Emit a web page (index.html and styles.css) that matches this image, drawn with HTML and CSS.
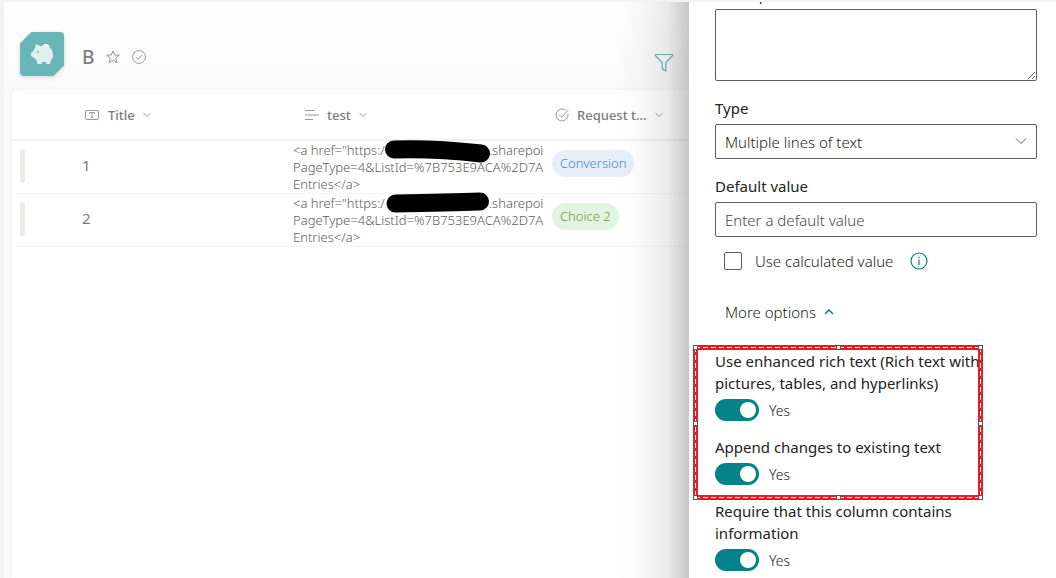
FILE: index.html
```html
<!DOCTYPE html>
<html lang="en">
<head>
<meta charset="utf-8">
<title>B - List</title>
<link rel="stylesheet" href="styles.css">
</head>
<body>
<div class="app">
  <main class="list-page">
    <header class="list-header">
      <svg class="list-logo" viewBox="0 0 44 44" aria-hidden="true">
        <path fill="#69b5b7" d="M11.500 0H40a4 4 0 0 1 4 4v29.500L33.500 44H4a4 4 0 0 1-4-4V11.500z"/>
        <path fill="#fff" d="M22 14.500c1-2.800 6-3.800 7.500 0l-1 3h-6z"/>
        <path fill="#e0f0f1" d="M16 12l4.500 2.300c2-.6 5-.6 7.500.4 3.500 1.300 5 4.500 5 8 0 2.500-1 4.500-2.500 6v2.500q0 .8-.8.800h-3q-.8 0-.8-.8V30h-4v1.500q0 .5-.8.500h-3q-.8 0-.8-.8l-.3-2.500c-1-.7-2-1.500-2.700-2.700l-2.800-1.500q-.5-.3-.5-1v-2q0-.7.5-1l2-1.500c.3-1 .7-1.700 1.500-2.500z"/>
        <circle cx="18" cy="20" r="1" fill="#69b5b7"/>
      </svg>
      <div class="title-group">
        <h1 class="list-title">B</h1>
        <button class="icon-button" aria-label="Favorite"><svg width="14" height="14" viewBox="0 0 14 14"><path d="M7 .9l1.700 4.100 4.600.2-3.600 2.900 1.300 4.600L7 10.100l-4 2.600 1.300-4.600L.7 5.200 5.300 5z"/></svg></button>
        <button class="icon-button" aria-label="Status"><svg width="14" height="14" viewBox="0 0 14 14"><circle cx="7" cy="7" r="6.400"/><path d="M4 7.200l2 2 4-4"/></svg></button>
      </div>
      <button class="filter-button" aria-label="Filter"><svg width="20" height="20" viewBox="0 0 20 20"><path d="M1.500 1.500h17v1.200l-6.700 6.800v8.500l-3.600-2.200V9.500L1.500 2.700z"/></svg></button>
    </header>
    <div class="list-card">
      <table class="list-table">
        <colgroup><col class="col-select"><col class="col-title"><col class="col-test"><col></colgroup>
        <thead>
          <tr>
            <th></th>
            <th><div class="column-head head-title">
              <svg width="15" height="12" viewBox="0 0 15 12"><rect x=".5" y="1.500" width="13" height="9" rx="1.500"/><path d="M4.500 5V3.500h5V5M7 3.500v5M6 8.500h2"/></svg>
              Title
              <svg class="caret" width="8" height="6" viewBox="0 0 8 6"><path d="M.7 1.200L4 4.500l3.300-3.300"/></svg>
            </div></th>
            <th><div class="column-head head-test">
              <svg width="15" height="12" viewBox="0 0 15 12"><path d="M1 1.500h10M1 6h14M1 10.500h8"/></svg>
              test
              <svg class="caret" width="8" height="6" viewBox="0 0 8 6"><path d="M.7 1.200L4 4.500l3.300-3.300"/></svg>
            </div></th>
            <th><div class="column-head head-title">
              <svg width="14" height="14" viewBox="0 0 14 14"><path d="M10.500 2A6 6 0 1 0 13 6M4 6.500l2.700 2.700L13.300 2"/></svg>
              Request t...
              <svg class="caret" width="8" height="6" viewBox="0 0 8 6"><path d="M.7 1.200L4 4.500l3.300-3.300"/></svg>
            </div></th>
          </tr>
        </thead>
        <tbody>
          <tr>
            <td><span class="row-handle"></span></td>
            <td class="item-title">1</td>
            <td><div class="item-test">
              <div class="item-lines">&lt;a href="https:/<span class="redacted-gap"></span>.sharepoin<br>PageType=4&amp;ListId=%7B753E9ACA%2D7A<br>Entries&lt;/a&gt;</div>
              <svg class="redaction" width="120" height="26" viewBox="0 0 120 26"><path d="M14 12.500C45 11.500 70 13 101 16.500"/></svg>
            </div></td>
            <td><span class="pill pill-blue">Conversion</span></td>
          </tr>
          <tr>
            <td><span class="row-handle"></span></td>
            <td class="item-title">2</td>
            <td><div class="item-test">
              <div class="item-lines">&lt;a href="https:/<span class="redacted-gap"></span>.sharepoin<br>PageType=4&amp;ListId=%7B753E9ACA%2D7A<br>Entries&lt;/a&gt;</div>
              <svg class="redaction" width="120" height="26" viewBox="0 0 120 26"><path d="M15.500 13.500C50 13 75 12.500 100 11.500"/></svg>
            </div></td>
            <td><span class="pill pill-green">Choice 2</span></td>
          </tr>
        </tbody>
      </table>
    </div>
  </main>
  <aside class="panel">
    <form class="panel-form">
      <div class="field field-description">
        <label class="field-label" for="description">Description</label>
        <textarea class="control control-area" id="description"></textarea>
      </div>
      <div class="field">
        <label class="field-label" for="type">Type</label>
        <div class="select-box">
          <select class="control" id="type"><option>Multiple lines of text</option></select>
          <svg class="select-caret" width="12" height="8" viewBox="0 0 12 8" aria-hidden="true"><path d="M1 1.500l5 5 5-5"/></svg>
        </div>
      </div>
      <div class="field">
        <label class="field-label" for="default">Default value</label>
        <input class="control" id="default" type="text" placeholder="Enter a default value">
      </div>
      <div class="check-row">
        <input class="check" id="calculated" type="checkbox">
        <label for="calculated">Use calculated value</label>
        <button class="info-button" type="button" aria-label="Information"><svg width="18" height="18" viewBox="0 0 18 18"><circle cx="9" cy="9" r="8"/><path d="M9 7.500v5.500M9 4.700v1.500"/></svg></button>
      </div>
      <button class="more-button" type="button">More options <svg width="10" height="6" viewBox="0 0 10 6"><path d="M1 5l4-4 4 4"/></svg></button>
      <div class="marked">
        <div class="toggle-field">
          <label class="toggle-label" for="rich">Use enhanced rich text (Rich text with<br>pictures, tables, and hyperlinks)</label>
          <div class="toggle-row"><input class="toggle" id="rich" type="checkbox" role="switch" checked><span>Yes</span></div>
        </div>
        <div class="toggle-field">
          <label class="toggle-label" for="append">Append changes to existing text</label>
          <div class="toggle-row"><input class="toggle" id="append" type="checkbox" role="switch" checked><span>Yes</span></div>
        </div>
        <div class="frame">
          <span class="grip grip-nw"></span><span class="grip grip-n"></span><span class="grip grip-ne"></span>
          <span class="grip grip-w"></span><span class="grip grip-e"></span>
          <span class="grip grip-sw"></span><span class="grip grip-s"></span><span class="grip grip-se"></span>
        </div>
      </div>
      <div class="toggle-field">
        <label class="toggle-label" for="require">Require that this column contains<br>information</label>
        <div class="toggle-row"><input class="toggle" id="require" type="checkbox" role="switch" checked><span>Yes</span></div>
      </div>
    </form>
  </aside>
</div>
</body>
</html>
```
FILE: styles.css
```css
* { box-sizing: border-box; }
body {
  margin: 0;
  font-family: "Noto Sans", "Open Sans", sans-serif;
  font-size: 15px;
  font-weight: 300;
  color: #242322;
  background: #fff;
}
button, input, select, textarea { font: inherit; color: inherit; margin: 0; }
button { background: none; border: 0; padding: 0; display: flex; align-items: center; }
svg { display: block; flex: none; fill: none; stroke: #999; }
.app {
  display: flex;
  height: 100vh;
  overflow: hidden;
  border-top: 2px solid #f3f3f3;
}

.list-page {
  position: relative;
  flex: 1;
  min-width: 0;
  display: flex;
  flex-direction: column;
  padding-left: 8px;
  border-left: 4px solid #f3f3f3;
  background: linear-gradient(#fefefe, #fafafa 88px);
}
.list-page::after {
  content: "";
  position: absolute;
  inset: 0 0 0 auto;
  width: 72px;
  pointer-events: none;
  background: linear-gradient(to right, transparent, rgba(0, 0, 0, .02) 30%, rgba(0, 0, 0, .08) 70%, rgba(0, 0, 0, .22));
}
.list-header { display: flex; align-items: center; height: 88px; padding: 16px 15px 0 8px; }
.list-logo { width: 44px; height: 44px; stroke: none; filter: drop-shadow(0 1px 2px rgba(0, 0, 0, .15)); }
.title-group { display: flex; align-items: center; gap: 12px; padding: 5px 0 0 18px; }
.list-title { margin: 0; font-size: 19px; font-weight: 500; line-height: 24px; color: #808080; }
.filter-button { margin: 18px 0 0 auto; }
.filter-button svg { stroke: #69b5b7; stroke-width: 1.200; }
.list-card { flex: 1; background: #fff; border-radius: 6px 0 0 0; box-shadow: 0 0 4px rgba(0, 0, 0, .06); }

.list-table { width: 100%; table-layout: fixed; border-collapse: separate; border-spacing: 0; color: #5c5c5c; }
.col-select { width: 70px; }
.col-title { width: 211px; }
.col-test { width: 259px; }
th, td { padding: 0; text-align: left; }
th { height: 51px; border-bottom: 2px solid #f1f1f1; }
td { height: 53px; border-bottom: 1px solid #f5f5f5; }
.column-head { display: flex; align-items: center; gap: 8px; font-size: 13px; font-weight: 500; white-space: nowrap; color: #7b7b7b; }
.head-title { padding-left: 3px; }
.head-test { padding-left: 11px; }
.row-handle { display: block; width: 5px; height: 34px; margin: 0 0 2px 8px; border-radius: 2px; background: #edebe9; }
.item-title { padding-bottom: 4px; font-weight: 400; color: #7b7b7b; }
.item-test { position: relative; width: 251px; font-size: 13px; line-height: 17px; }
.item-lines { overflow: hidden; white-space: nowrap; }
.redacted-gap { display: inline-block; width: 104px; }
.redaction { position: absolute; left: 87px; top: -5px; stroke: #000; stroke-width: 18; stroke-linecap: round; }
.pill { display: inline-block; margin-bottom: 8px; padding: 0 8px; border-radius: 14px; font-size: 13px; line-height: 27px; vertical-align: middle; }
.pill-blue { background: #e6effa; color: #4586c6; }
.pill-green { background: #e1f5e1; color: #6b9848; }

.panel { position: relative; flex: 0 0 367px; background: #fff; overflow: hidden; }
.panel-form { padding: 0 19px 0 26px; }
.field { margin-bottom: 16px; }
.field-label { display: block; margin-bottom: 5px; font-weight: 400; line-height: 22px; }
.field-description { margin-top: -19px; }
.field-description .field-label { margin-bottom: 4px; }
.control {
  display: block;
  width: 100%;
  height: 35px;
  padding: 0 9px;
  border: 1px solid #605e5c;
  border-radius: 2px;
  background: #fff;
  appearance: none;
}
.control::placeholder { color: #4a4846; }
.control-area { height: 72px; resize: vertical; }
.select-box { position: relative; }
.select-caret { position: absolute; right: 10px; top: 13px; stroke: #605e5c; }
.check-row { display: flex; align-items: center; height: 16px; padding-left: 9px; }
.check { appearance: none; width: 18px; height: 18px; margin-right: 13px; border: 1px solid #605e5c; border-radius: 2px; }
.info-button { margin-left: 17px; }
.info-button svg { stroke: #03828a; stroke-width: 1.200; }
.more-button { gap: 8px; height: 22px; margin: 32px 0 27px 10px; }
.more-button svg { stroke: #03828a; stroke-width: 1.500; }
.marked { position: relative; }
.toggle-field { margin-bottom: 10px; }
.toggle-label { display: block; font-weight: 400; line-height: 22px; white-space: nowrap; }
.toggle-row { display: flex; align-items: center; gap: 10px; height: 32px; font-size: 14px; }
.toggle {
  appearance: none;
  display: flex;
  justify-content: flex-end;
  align-items: center;
  width: 44px;
  height: 22px;
  padding: 0 3px;
  border-radius: 11px;
  background: #03828a;
}
.toggle::before { content: ""; width: 16px; height: 16px; border-radius: 50%; background: #fff; }
.frame { position: absolute; inset: -5px 54px -10px -22px; border: 5px solid #ed1c24; pointer-events: none; }
.frame::before {
  --across: repeating-linear-gradient(to right, #fff 0 5px, #555 5px 8px);
  --down: repeating-linear-gradient(#fff 0 5px, #555 5px 8px);
  content: "";
  position: absolute;
  inset: -3px;
  background:
    var(--across) top / 100% 1px no-repeat,
    var(--across) bottom / 100% 1px no-repeat,
    var(--down) left / 1px 100% no-repeat,
    var(--down) right / 1px 100% no-repeat;
}
.grip { position: absolute; width: 5px; height: 5px; border: 1px solid #555; background: #fff; }
.grip-nw { left: -5px; top: -5px; }
.grip-n { left: calc(50% - 2px); top: -5px; }
.grip-ne { right: -5px; top: -5px; }
.grip-w { left: -5px; top: calc(50% - 2px); }
.grip-e { right: -5px; top: calc(50% - 2px); }
.grip-sw { left: -5px; bottom: -5px; }
.grip-s { left: calc(50% - 2px); bottom: -5px; }
.grip-se { right: -5px; bottom: -5px; }
```
